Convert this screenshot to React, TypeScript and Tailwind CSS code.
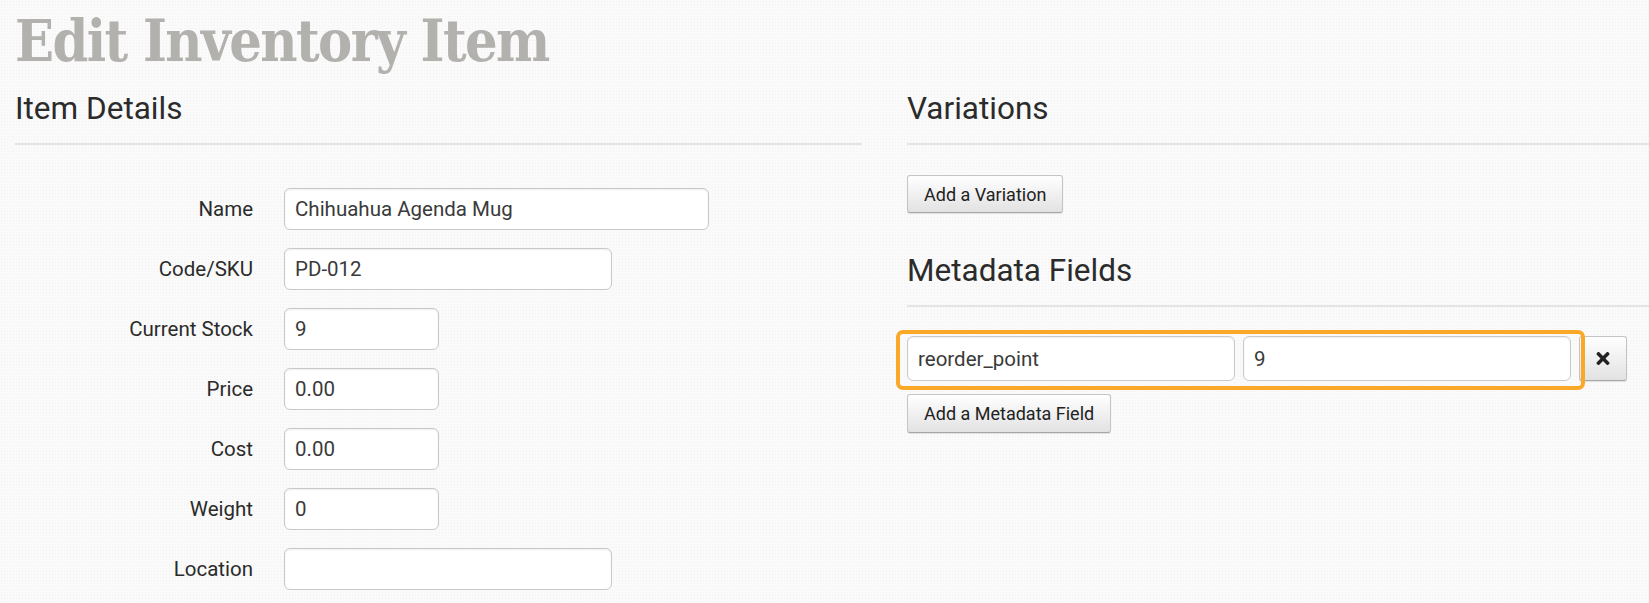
import { FaTimes } from 'react-icons/fa';

const fields = [
  { label: 'Name', value: 'Chihuahua Agenda Mug', width: 'w-[425px]' },
  { label: 'Code/SKU', value: 'PD-012', width: 'w-[328px]' },
  { label: 'Current Stock', value: '9', width: 'w-[155px]' },
  { label: 'Price', value: '0.00', width: 'w-[155px]' },
  { label: 'Cost', value: '0.00', width: 'w-[155px]' },
  { label: 'Weight', value: '0', width: 'w-[155px]' },
  { label: 'Location', value: '', width: 'w-[328px]' },
];

const inputClass =
  'h-[42px] rounded-[6px] border-[1.5px] border-[#c9c9c9] bg-white px-[10px] text-[20.5px] text-[#3a3a3a] shadow-[inset_0_1px_2px_rgba(0,0,0,0.07)] outline-none';

const buttonClass =
  'rounded-[3px] border border-[#c4c4c4] border-b-[#a6a6a6] bg-gradient-to-b from-white to-[#e2e2e2] px-[16px] text-[18px] text-[#222] shadow-[0_1px_1px_rgba(0,0,0,0.1)]';

const SectionHeading = ({ children }: { children: string }) => (
  <h2 className="border-b-2 border-[#e4e4e4] pb-[16px] text-[31.5px] leading-[36px] text-[#2b2b2b]">
    {children}
  </h2>
);

export default function App() {
  return (
    <div
      className="min-h-[603px] w-full overflow-hidden bg-[#fafafa] bg-[radial-gradient(#f2f2f2_1px,transparent_1px)] bg-[length:3px_3px] pl-[15px]"
      style={{ fontFamily: 'Roboto, "Noto Sans", sans-serif' }}
    >
      <h1
        className="pt-[8px] text-[57px] font-bold leading-[66px] tracking-[-1.6px] text-[#b2b1ad]"
        style={{ fontFamily: '"DejaVu Serif Condensed", "DejaVu Serif", serif' }}
      >
        Edit Inventory Item
      </h1>

      <div className="mt-[17px] flex gap-[45px]">
        {/* Item details */}
        <div className="w-[847px] shrink-0">
          <SectionHeading>Item Details</SectionHeading>
          <div className="mt-[43px] flex flex-col gap-[18px]">
            {fields.map((f) => (
              <div key={f.label} className="flex items-center gap-[31px]">
                <label className="w-[238px] text-right text-[20.5px] text-[#2b2b2b]">{f.label}</label>
                <input className={`${inputClass} ${f.width}`} defaultValue={f.value} />
              </div>
            ))}
          </div>
        </div>

        {/* Variations + metadata */}
        <div className="flex-1">
          <SectionHeading>Variations</SectionHeading>
          <button className={`${buttonClass} mt-[30px] h-[38px]`}>Add a Variation</button>

          <div className="mt-[40px]">
            <SectionHeading>Metadata Fields</SectionHeading>
          </div>

          <div className="relative mt-[29px] flex items-center gap-[8px]">
            <div className="pointer-events-none absolute left-[-11px] top-[-6px] h-[60px] w-[689px] rounded-[7px] border-[4.5px] border-[#f9a828]" />
            <input className={`${inputClass} h-[45px] w-[328px]`} defaultValue="reorder_point" />
            <input className={`${inputClass} h-[45px] w-[328px]`} defaultValue="9" />
            <button className={`${buttonClass} flex h-[45px] w-[48px] items-center justify-center px-0`}>
              <FaTimes className="h-[19px] w-[19px] text-[#222]" />
            </button>
          </div>

          <button className={`${buttonClass} mt-[13px] h-[39px]`}>Add a Metadata Field</button>
        </div>
      </div>
    </div>
  );
}
